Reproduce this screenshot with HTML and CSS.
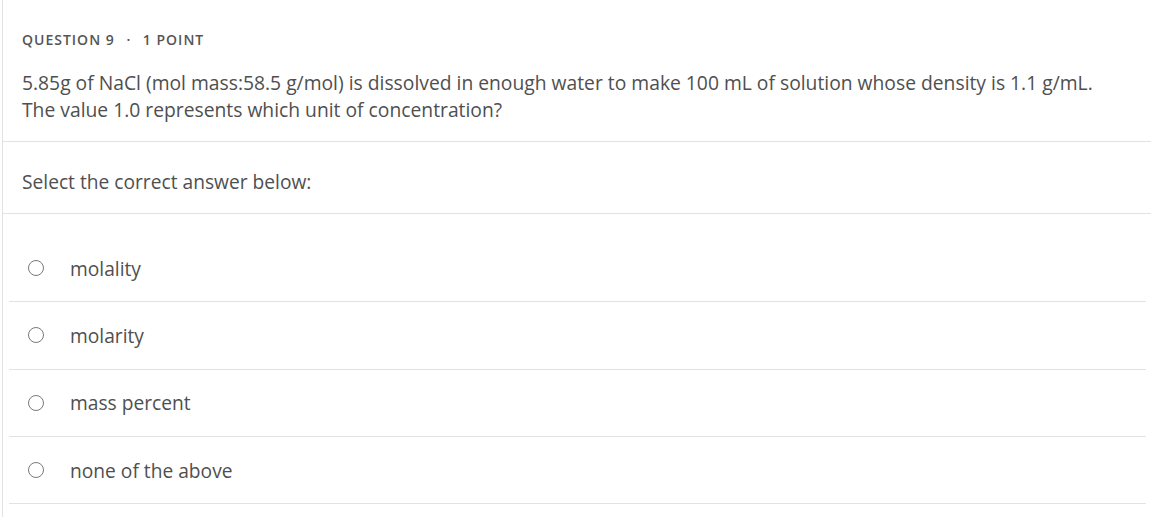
FILE: index.html
```html
<!DOCTYPE html>
<html>
<head>
<meta charset="utf-8">
<link rel="stylesheet" href="styles.css">
</head>
<body>
<div class="question">
  <div class="q-head">
    <div class="q-label">QUESTION 9 <span class="dot">·</span> 1 POINT</div>
    <p class="q-text">5.85g of NaCl (mol mass:58.5 g/mol) is dissolved in enough water to make 100 mL of solution whose density is 1.1 g/mL. The value 1.0 represents which unit of concentration?</p>
  </div>
  <div class="q-prompt">Select the correct answer below:</div>
  <ul class="options">
    <li class="option"><span class="radio"></span><span class="opt-text">molality</span></li>
    <li class="option"><span class="radio"></span><span class="opt-text">molarity</span></li>
    <li class="option"><span class="radio"></span><span class="opt-text">mass percent</span></li>
    <li class="option"><span class="radio"></span><span class="opt-text">none of the above</span></li>
  </ul>
</div>
</body>
</html>
```
FILE: styles.css
```css
html, body {
  margin: 0;
  padding: 0;
  background: #fff;
}
body {
  font-family: "Open Sans", "Noto Sans", sans-serif;
  color: #4f4f4f;
}
.question {
  margin-left: 2px;
  border-left: 1px solid #e2e2e2;
  min-height: 517px;
  box-sizing: border-box;
}
.q-head {
  padding: 31px 19px 18px;
  border-bottom: 1px solid #e2e2e2;
}
.q-label {
  font-size: 14px;
  font-weight: 600;
  letter-spacing: 1px;
  color: #555;
  line-height: 18px;
}
.dot {
  display: inline-block;
  margin: 0 7px;
}
.q-text {
  margin: 20px 0 0;
  font-size: 19.3px;
  line-height: 27px;
  max-width: 1100px;
}
.q-prompt {
  padding: 27px 19px 18px;
  font-size: 19.2px;
  line-height: 26px;
  border-bottom: 1px solid #e2e2e2;
}
.options {
  list-style: none;
  margin: 0 5px 0 6px;
  padding: 21px 0 0;
}
.option {
  display: flex;
  align-items: center;
  height: 66.3px;
  border-bottom: 1px solid #e2e2e2;
  padding-left: 19px;
  font-size: 19.2px;
}
.radio {
  width: 14px;
  height: 14px;
  border: 1px solid #7a7a7a;
  border-radius: 50%;
  flex: none;
}
.opt-text {
  margin-left: 26px;
}
```
